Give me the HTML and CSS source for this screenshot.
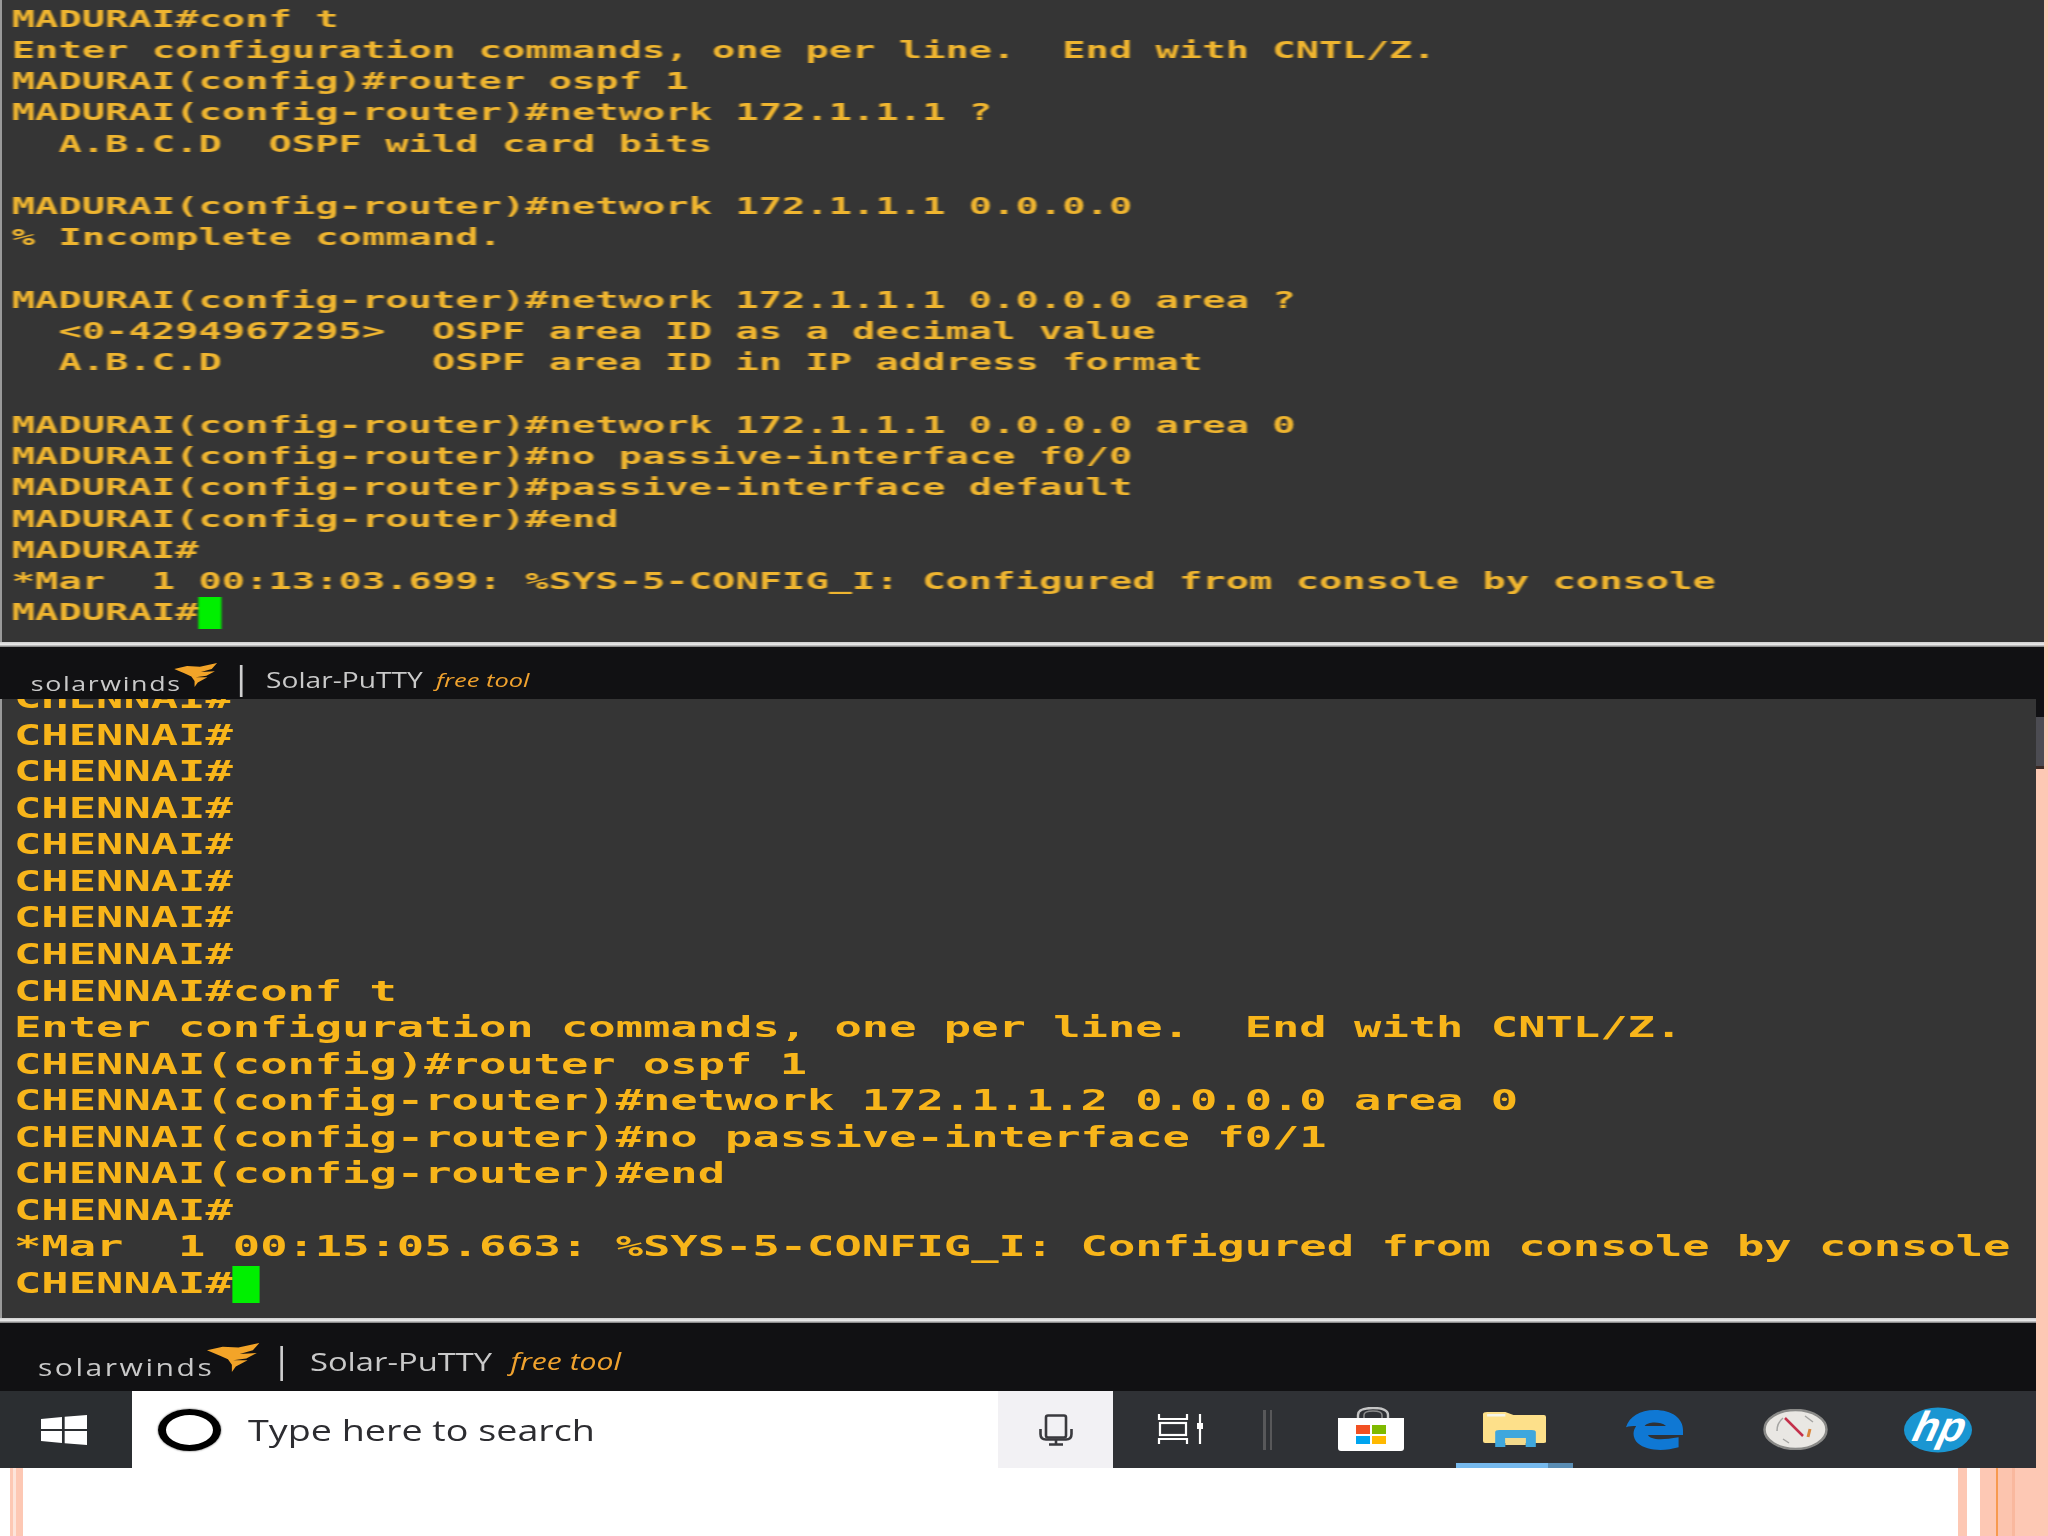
FILE: index.html
```html
<!DOCTYPE html>
<html lang="en">
<head>
<meta charset="utf-8">
<title>Solar-PuTTY OSPF configuration</title>
<link rel="stylesheet" href="styles.css">
</head>
<body>
<main class="slide">
  <section class="upper">
    <div class="term term-top">
<pre class="console console-top">MADURAI#conf t
Enter configuration commands, one per line.  End with CNTL/Z.
MADURAI(config)#router ospf 1
MADURAI(config-router)#network 172.1.1.1 ?
  A.B.C.D  OSPF wild card bits

MADURAI(config-router)#network 172.1.1.1 0.0.0.0
% Incomplete command.

MADURAI(config-router)#network 172.1.1.1 0.0.0.0 area ?
  &lt;0-4294967295&gt;  OSPF area ID as a decimal value
  A.B.C.D         OSPF area ID in IP address format

MADURAI(config-router)#network 172.1.1.1 0.0.0.0 area 0
MADURAI(config-router)#no passive-interface f0/0
MADURAI(config-router)#passive-interface default
MADURAI(config-router)#end
MADURAI#
*Mar  1 00:13:03.699: %SYS-5-CONFIG_I: Configured from console by console
MADURAI#<span class="cursor"></span></pre>
    </div>
    <div class="rule"></div>
    <div class="brandbar">
      <div class="brand-row brand-row-top">
        <div class="wordmark">
          <span class="sw-name">solarwinds</span>
          <svg class="sw-flame" viewBox="0 0 40 32" preserveAspectRatio="none"><path d="M0 8 L12 4 L24 5 L40 0 L35 8 L25 12 L38 11 L30 17 L20 19 L31 19 L22 26 L19 32 L19 24 L16 18 L10 14 Z"/></svg>
        </div>
        <span class="divider"></span>
        <span class="product">Solar-PuTTY</span>
        <em class="free">free tool</em>
      </div>
    </div>
  </section>

  <section class="lower">
    <div class="lower-main">
      <div class="term term-bottom">
<pre class="console console-bottom">CHENNAI#
CHENNAI#
CHENNAI#
CHENNAI#
CHENNAI#
CHENNAI#
CHENNAI#
CHENNAI#
CHENNAI#conf t
Enter configuration commands, one per line.  End with CNTL/Z.
CHENNAI(config)#router ospf 1
CHENNAI(config-router)#network 172.1.1.2 0.0.0.0 area 0
CHENNAI(config-router)#no passive-interface f0/1
CHENNAI(config-router)#end
CHENNAI#
*Mar  1 00:15:05.663: %SYS-5-CONFIG_I: Configured from console by console
CHENNAI#<span class="cursor"></span></pre>
      </div>
      <div class="rule"></div>
      <div class="brandbar brandbar-tall">
        <div class="brand-row brand-row-bottom">
          <div class="wordmark">
            <span class="sw-name">solarwinds</span>
            <svg class="sw-flame" viewBox="0 0 40 32" preserveAspectRatio="none"><path d="M0 8 L12 4 L24 5 L40 0 L35 8 L25 12 L38 11 L30 17 L20 19 L31 19 L22 26 L19 32 L19 24 L16 18 L10 14 Z"/></svg>
          </div>
          <span class="divider"></span>
          <span class="product">Solar-PuTTY</span>
          <em class="free">free tool</em>
        </div>
      </div>
      <div class="taskbar">
        <div class="start">
          <svg class="win" viewBox="0 0 34 30" preserveAspectRatio="none"><path d="M0 4 L15.5 2 V14 H0 Z M17.5 1.7 L34 0 V14 H17.5 Z M0 16 H15.5 V28 L0 26 Z M17.5 16 H34 V30 L17.5 28.3 Z"/></svg>
        </div>
        <div class="search">
          <span class="cortana"></span>
          <span class="search-text">Type here to search</span>
        </div>
        <div class="mic">
          <svg class="mic-icon" viewBox="0 0 34 32"><g fill="none" stroke="#3a3a3e" stroke-width="2.6"><rect x="7" y="1.500" width="20" height="22" rx="2"/><path d="M1.500 15 V20 Q1.500 25.500 7 25.500 H27 Q32.500 25.500 32.500 20 V15"/><path d="M17 25 V30 M10 30.500 H24"/></g></svg>
        </div>
        <div class="tray">
          <svg class="taskview" viewBox="0 0 46 30"><g fill="none" stroke="#fff" stroke-width="2.2"><path d="M2 0 V5 H30 V0"/><rect x="3" y="9" width="26" height="12"/><path d="M2 30 V25 H30 V30"/><path d="M43 0 V30"/></g><rect x="40" y="9" width="6" height="6" fill="#fff"/></svg>
          <span class="sep"></span>
          <svg class="store" viewBox="0 0 66 44"><path d="M20 11 V8 Q20 1 35 1 Q50 1 50 8 V11" fill="none" stroke="#c4c4c4" stroke-width="2.4"/><path d="M26 11 V8 Q26 4 35 4 Q44 4 44 8 V11" fill="none" stroke="#8d8d8d" stroke-width="1.500"/><path d="M0 11 H66 V41 Q66 44 63 44 H3 Q0 44 0 41 Z" fill="#fff"/><rect x="18" y="18" width="14" height="9" fill="#f25022"/><rect x="34" y="18" width="14" height="9" fill="#7fba00"/><rect x="18" y="29" width="14" height="8" fill="#00a4ef"/><rect x="34" y="29" width="14" height="8" fill="#ffb900"/></svg>
          <span class="folder-tab">
            <svg class="folder" viewBox="0 0 31 35" preserveAspectRatio="none"><path d="M0 2 Q0 0 2 0 H11 L15 3 H30 Q31 3 31 5 V30 Q31 31 29 31 H1 Q0 31 0 29 Z" fill="#fde08a"/><rect x="2" y="2" width="9" height="2.500" fill="#f4f4e8"/><path d="M6 35 V20 Q6 18 8 18 H24 Q26 18 26 20 V35 H21 V26 H11 V35 Z" fill="#3fa7dd"/><rect x="11" y="26" width="10" height="7" fill="#f2d98c"/></svg>
            <span class="active-line"><span class="active-line-end"></span></span>
          </span>
          <svg class="edge" viewBox="0 0 168 120" preserveAspectRatio="none"><path fill="#0f78d4" fill-rule="evenodd" d="M0 52 C10 20 40 0 85 0 C135 0 168 25 168 60 V75 H65 C70 88 100 92 155 82 V112 C110 125 60 122 35 100 C20 85 18 65 30 48 C20 48 8 48 0 52 Z M55 48 C62 36 100 33 118 48 Z"/></svg>
          <svg class="gauge" viewBox="0 0 65 41"><ellipse cx="32.500" cy="20.500" rx="31" ry="19.500" fill="#e9e7e3" stroke="#8a8a88" stroke-width="2.500"/><path d="M22 9 L40 27" stroke="#c4304a" stroke-width="2.500"/><path d="M47 20 L45 28" stroke="#d9863a" stroke-width="3"/><path d="M14 22 Q14 14 20 9 M42 7 L50 13 M20 30 L26 34" stroke="#a5a5a3" stroke-width="1.500" fill="none"/></svg>
          <svg class="hp" viewBox="0 0 68 46"><ellipse cx="34" cy="23" rx="34" ry="22.500" fill="#1a96d2"/><text class="hp-text" x="41" y="34" text-anchor="middle" transform="skewX(-14)">hp</text></svg>
        </div>
      </div>
    </div>
    <div class="scroll-edge">
      <span class="scroll-cap"></span>
      <span class="scroll-thumb"></span>
      <span class="scroll-foot"></span>
    </div>
  </section>

  <footer class="slide-foot">
    <span class="gap gap-a"></span>
    <span class="stripe stripe-a"></span>
    <span class="gap gap-b"></span>
    <span class="stripe stripe-b"></span>
    <span class="gap gap-c"></span>
    <span class="stripe stripe-c"></span>
    <span class="gap gap-d"></span>
    <span class="stripe stripe-d"></span>
    <span class="orange"></span>
    <span class="stripe stripe-e"></span>
    <span class="stripe stripe-f"></span>
    <span class="stripe stripe-g"></span>
  </footer>
</main>
</body>
</html>
```

FILE: styles.css
```css
* { box-sizing: border-box; }
html, body { margin: 0; padding: 0; }
body { width: 2048px; height: 1536px; overflow: hidden; background: #fff; }

.slide {
  width: 2048px;
  height: 1536px;
  display: flex;
  flex-direction: column;
  background: #fdc8b4;
}

.upper { width: 2044px; flex: none; }
.lower { width: 2044px; flex: none; display: flex; align-items: flex-start; }
.lower-main { width: 2036px; flex: none; }

.term {
  background: #353535;
  border-left: 2px solid #9a9a9a;
  overflow: hidden;
}
.term-top { height: 642px; }
.term-bottom { height: 619px; }

.console {
  margin: 0;
  font-family: "DejaVu Sans Mono", monospace;
  font-weight: 700;
  transform-origin: left top;
  white-space: pre;
}
.console-top {
  padding: 3.5px 0 0 5.9px;
  font-size: 23.5px;
  line-height: 31.25px;
  color: #efb530;
  transform: scaleX(1.65);
  filter: blur(.7px);
}
.console-bottom {
  margin-top: -18px;
  padding-left: 7.5px;
  font-size: 28.4px;
  line-height: 36.57px;
  color: #f8b51a;
  transform: scaleX(1.6);
  filter: blur(.3px);
}
.cursor {
  display: inline-block;
  width: 1ch;
  height: 1lh;
  vertical-align: top;
  background: #00f000;
}

.rule {
  height: 5px;
  background: linear-gradient(#d0d0d0, #e8e8e8 50%, #777);
}

.brandbar {
  height: 52px;
  overflow: hidden;
  background: #111113;
  color: #c9c9c9;
  font-family: "Open Sans", sans-serif;
}
.brandbar-tall { height: 68px; }

.brand-row {
  display: flex;
  align-items: flex-start;
  transform-origin: left top;
}
.brand-row-top {
  padding-left: 23px;
  transform: scaleX(1.34);
  filter: blur(.5px);
}
.brand-row-bottom {
  padding-left: 29px;
  transform: scaleX(1.31);
  filter: blur(.3px);
}

.wordmark { display: flex; align-items: flex-start; flex: none; }
.sw-flame { fill: #f3a428; display: block; flex: none; }

.brand-row-top .wordmark { width: 156px; }
.brand-row-top .sw-name { font-size: 20px; line-height: 26px; letter-spacing: 1.2px; margin-top: 23.5px; }
.brand-row-top .sw-flame { width: 32px; height: 24px; margin: 16px 0 0 -5px; }
.brand-row-top .divider { height: 32px; margin: 18px 18px 0 0; }
.brand-row-top .product { font-size: 21px; line-height: 30px; margin: 18px 10px 0 0; }
.brand-row-top .free { font-size: 19px; line-height: 30px; margin-top: 18px; }

.brand-row-bottom .wordmark { width: 185px; }
.brand-row-bottom .sw-name { font-size: 23px; line-height: 30px; letter-spacing: 1.9px; margin-top: 29px; }
.brand-row-bottom .sw-flame { width: 40px; height: 29px; margin: 20px 0 0 -6px; }
.brand-row-bottom .divider { height: 35px; margin: 23px 21px 0 0; }
.brand-row-bottom .product { font-size: 25px; line-height: 34px; margin: 21px 14px 0 0; }
.brand-row-bottom .free { font-size: 23px; line-height: 34px; margin-top: 21px; }

.divider { display: block; width: 1.6px; background: #cfcfcf; flex: none; }
.free { color: #f0a22e; font-style: italic; }

.taskbar { height: 77px; display: flex; background: #2f3135; }
.start {
  width: 132px;
  flex: none;
  padding: 24px 0 0 41px;
  background: #2b2e31;
}
.win { width: 46px; height: 30px; fill: #fff; display: block; }

.search {
  width: 866px;
  flex: none;
  display: flex;
  align-items: center;
  padding: 0 0 0 26px;
  background: #fff;
}
.cortana {
  width: 63px;
  height: 42px;
  flex: none;
  border-style: solid;
  border-color: #000;
  border-width: 6px 8px;
  border-radius: 50%;
  box-shadow: 0 0 2px #444;
  margin-right: 27px;
}
.search-text {
  font-family: "Open Sans", sans-serif;
  font-size: 29px;
  color: #2c2c30;
  transform: scaleX(1.3);
  transform-origin: left center;
  white-space: nowrap;
}

.mic {
  width: 115px;
  flex: none;
  display: flex;
  justify-content: center;
  padding-top: 23px;
  background: #f2f1f4;
}
.mic-icon { width: 34px; height: 32px; display: block; }

.tray {
  flex: 1;
  display: flex;
  align-items: flex-start;
}
.taskview { width: 46px; height: 30px; margin: 23px 0 0 44px; flex: none; }
.sep {
  width: 9px;
  height: 40px;
  margin: 19px 0 0 60px;
  flex: none;
  border-left: 3px solid #58585a;
  border-right: 2px solid #58585a;
}
.store { width: 66px; height: 44px; margin: 16px 0 0 66px; flex: none; }
.folder-tab {
  width: 117px;
  height: 77px;
  margin-left: 52px;
  flex: none;
  display: flex;
  flex-direction: column;
  align-items: center;
  justify-content: space-between;
  padding-top: 21px;
}
.folder { width: 63px; height: 35px; flex: none; }
.active-line { display: block; width: 117px; height: 5px; background: #76b9ed; position: relative; }
.active-line-end { position: absolute; right: 0; top: 0; bottom: 0; width: 25px; background: #5a8db4; }
.edge { width: 57px; height: 40px; margin: 19px 0 0 53px; flex: none; }
.gauge { width: 65px; height: 41px; margin: 18px 0 0 80px; flex: none; filter: blur(.6px); }
.hp { width: 68px; height: 46px; margin: 16px 0 0 76px; flex: none; }
.hp-text {
  font-family: "Liberation Sans", sans-serif;
  font-style: italic;
  font-weight: 700;
  font-size: 42px;
  fill: #fff;
}

.scroll-edge { width: 8px; flex: none; display: flex; flex-direction: column; }
.scroll-cap { height: 18px; background: #111113; }
.scroll-thumb { height: 49px; background: #4c4c52; }
.scroll-foot { height: 3px; background: #3b2a24; }

.slide-foot { flex: 1; display: flex; background: #fff; }
.gap, .stripe, .orange { display: block; flex: none; }
.gap { background: #fff; }
.gap-a { width: 10px; }
.stripe-a { width: 3px; }
.gap-b { width: 3px; background: #fde4da; }
.stripe-b { width: 7px; }
.gap-c { width: 1935px; }
.stripe-c { width: 9px; }
.gap-d { width: 13px; }
.stripe { background: #fdc8b4; }
.stripe-d { width: 16px; }
.orange { width: 2px; background: #f79a50; }
.stripe-e { width: 14px; background: #fcc4ae; }
.stripe-f { width: 3px; background: #f9b89e; }
.stripe-g { flex: 1; }
```
